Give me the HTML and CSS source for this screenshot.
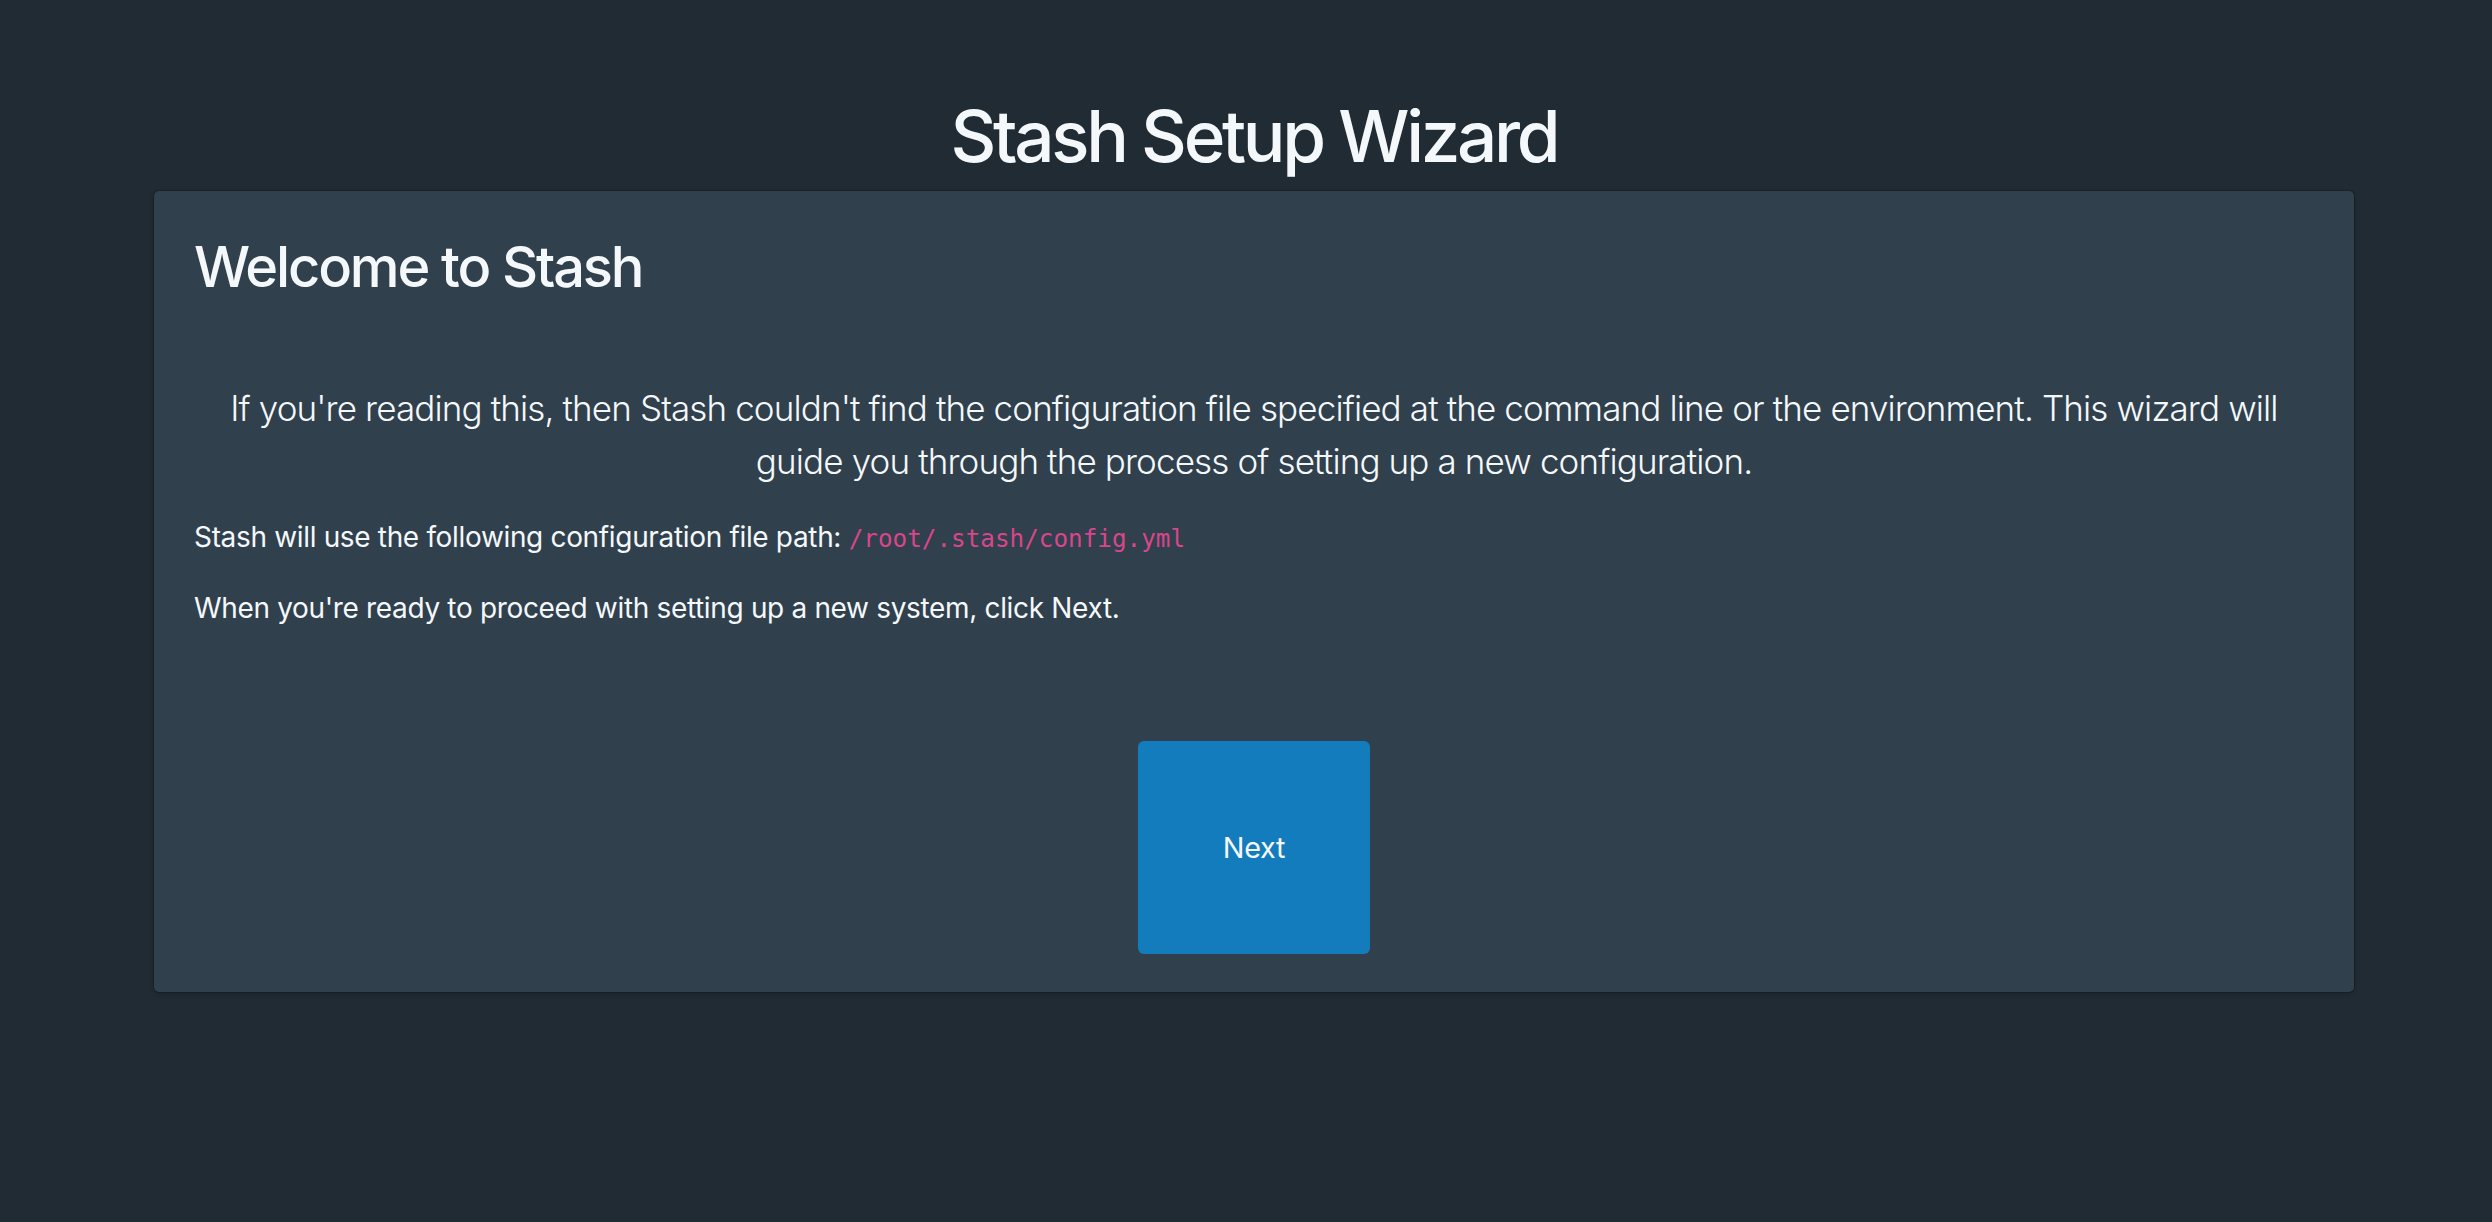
FILE: index.html
```html
<!DOCTYPE html>
<html lang="en">
<head>
<meta charset="utf-8">
<title>Stash Setup Wizard</title>
<link rel="stylesheet" href="styles.css">
</head>
<body>
<div class="container">
  <h1 class="title">Stash Setup Wizard</h1>
  <div class="card">
    <section>
      <h2 class="welcome">Welcome to Stash</h2>
      <p class="lead">If you're reading this, then Stash couldn't find the configuration file specified at the command line or the environment. This wizard will guide you through the process of setting up a new configuration.</p>
      <p class="text">Stash will use the following configuration file path: <code class="path">/root/.stash/config.yml</code></p>
      <p class="text">When you're ready to proceed with setting up a new system, click Next.</p>
    </section>
    <section class="actions">
      <button class="btn-next" type="button">Next</button>
    </section>
  </div>
</div>
</body>
</html>
```

FILE: styles.css
```css
html, body {
  margin: 0;
  padding: 0;
}
body {
  background: #202b33;
  color: #f5f8fa;
  font-family: Inter, "Noto Sans", "Liberation Sans", sans-serif;
  font-size: 28.8px;
  line-height: 1.5;
  min-height: 1222px;
}
.container {
  width: 2200px;
  margin-left: 154px;
  padding-top: 94px;
}
.title {
  margin: 0 0 12px 0;
  font-size: 71px;
  font-weight: 500;
  line-height: 1.2;
  letter-spacing: -0.047em;
  text-align: center;
}
.card {
  background: #30404d;
  border-radius: 5px;
  box-shadow: 0 0 0 1px rgba(16, 22, 26, 0.4), 0 2px 4px rgba(16, 22, 26, 0.3);
  padding: 43px 40px 36px 40px;
  height: 801px;
  box-sizing: border-box;
}
.welcome {
  margin: 0 0 81px 0;
  font-size: 56px;
  font-weight: 500;
  line-height: 1.2;
  letter-spacing: -0.038em;
}
.lead {
  margin: 0 0 28px 0;
  font-size: 35px;
  font-weight: 300;
  line-height: 53px;
  letter-spacing: -0.025em;
  text-align: center;
}
.text {
  margin: 0 0 27px 0;
  font-size: 28px;
  line-height: 43px;
  letter-spacing: -0.012em;
}
.path {
  font-family: "DejaVu Sans Mono", "Liberation Mono", monospace;
  font-size: 24.3px;
  letter-spacing: 0;
  color: #d9468b;
}
.actions {
  margin-top: 111px;
  display: flex;
  justify-content: center;
}
.btn-next {
  width: 232px;
  height: 213px;
  background: #137cbd;
  color: #f5f8fa;
  border: none;
  border-radius: 6px;
  font-family: inherit;
  font-size: 28.8px;
  font-weight: 400;
  letter-spacing: -0.01em;
  padding: 0;
  cursor: pointer;
}
```
